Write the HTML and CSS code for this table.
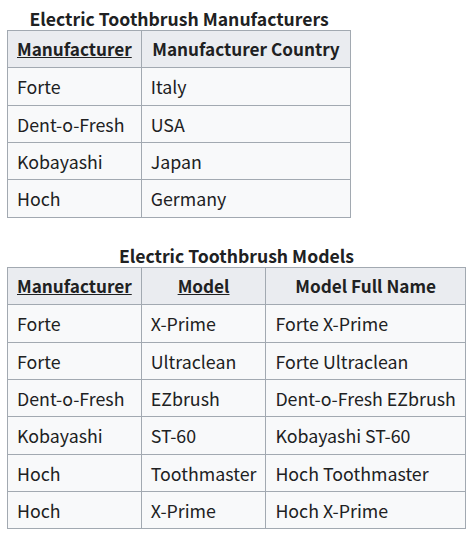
FILE: index.html
```html
<!DOCTYPE html>
<html>
<head>
<meta charset="utf-8">
<link rel="stylesheet" href="styles.css">
</head>
<body>
<table class="wikitable">
<caption>Electric Toothbrush Manufacturers</caption>
<tr><th><u>Manufacturer</u></th><th class="wide">Manufacturer Country</th></tr>
<tr><td>Forte</td><td>Italy</td></tr>
<tr><td>Dent-o-Fresh</td><td>USA</td></tr>
<tr><td>Kobayashi</td><td>Japan</td></tr>
<tr><td>Hoch</td><td>Germany</td></tr>
</table>
<table class="wikitable second">
<caption>Electric Toothbrush Models</caption>
<tr><th><u>Manufacturer</u></th><th><u>Model</u></th><th>Model Full Name</th></tr>
<tr><td>Forte</td><td>X-Prime</td><td>Forte X-Prime</td></tr>
<tr><td>Forte</td><td>Ultraclean</td><td>Forte Ultraclean</td></tr>
<tr><td>Dent-o-Fresh</td><td>EZbrush</td><td>Dent-o-Fresh EZbrush</td></tr>
<tr><td>Kobayashi</td><td>ST-60</td><td>Kobayashi ST-60</td></tr>
<tr><td>Hoch</td><td>Toothmaster</td><td>Hoch Toothmaster</td></tr>
<tr><td>Hoch</td><td>X-Prime</td><td>Hoch X-Prime</td></tr>
</table>
</body>
</html>
```
FILE: styles.css
```css
html, body {
  margin: 0;
  padding: 0;
  background: #ffffff;
}
body {
  padding: 8px 7px;
  font-family: "Noto Sans CJK KR", "Noto Sans", sans-serif;
  font-size: 18px;
  color: #202122;
}
.wikitable {
  border-collapse: collapse;
  background: #f8f9fa;
  border: 1px solid #a2a9b1;
}
.wikitable.second {
  margin-top: 27.5px;
}
.wikitable caption {
  font-weight: bold;
  font-size: 17.6px;
  line-height: 22px;
  text-align: center;
  background: #ffffff;
}
.wikitable th, .wikitable td {
  border: 1px solid #a2a9b1;
  padding: 4px 9px;
  line-height: 28.33px;
  white-space: nowrap;
}
.wikitable th {
  background: #eaecf0;
  font-weight: bold;
  font-size: 17.2px;
  text-align: center;
}
.wikitable th.wide {
  padding: 4px 10.5px;
}
.wikitable td {
  font-size: 17.8px;
  text-align: left;
}
```
